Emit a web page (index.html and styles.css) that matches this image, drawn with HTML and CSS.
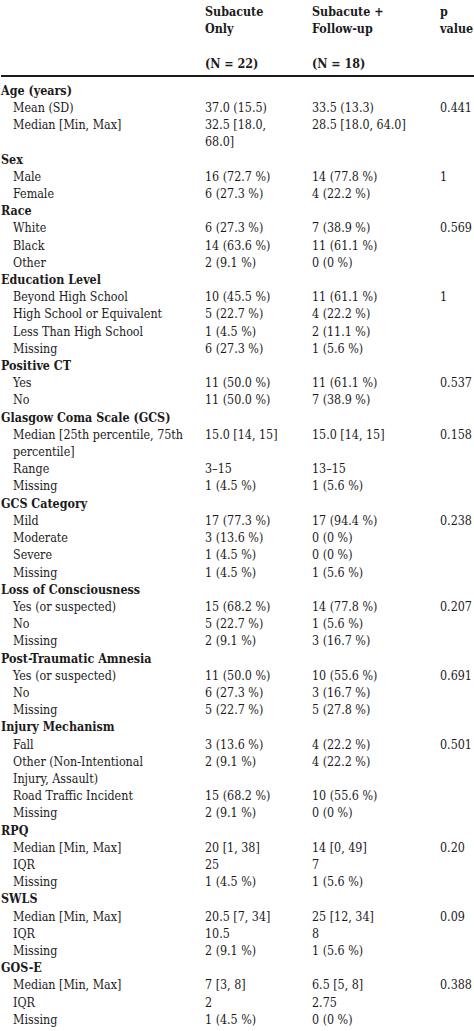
FILE: index.html
```html
<!DOCTYPE html>
<html lang="en">
<head>
<meta charset="utf-8">
<title>Participant characteristics</title>
<link rel="stylesheet" href="styles.css">
</head>
<body>
<table class="stats">
  <colgroup>
    <col class="c-label">
    <col class="c-a">
    <col class="c-b">
    <col class="c-p">
  </colgroup>
  <thead>
    <tr>
      <th></th>
      <th>Subacute<br>Only<br><br>(N = 22)</th>
      <th>Subacute +<br>Follow-up<br><br>(N = 18)</th>
      <th>p<br>value</th>
    </tr>
  </thead>
  <tbody>
    <tr class="grp"><td>Age (years)</td><td></td><td></td><td></td></tr>
    <tr><td class="sub">Mean (SD)</td><td>37.0 (15.5)</td><td>33.5 (13.3)</td><td>0.441</td></tr>
    <tr><td class="sub">Median [Min, Max]</td><td class="wrap">32.5 [18.0, 68.0]</td><td>28.5 [18.0, 64.0]</td><td></td></tr>

    <tr class="grp"><td>Sex</td><td></td><td></td><td></td></tr>
    <tr><td class="sub">Male</td><td>16 (72.7 %)</td><td>14 (77.8 %)</td><td>1</td></tr>
    <tr><td class="sub">Female</td><td>6 (27.3 %)</td><td>4 (22.2 %)</td><td></td></tr>

    <tr class="grp"><td>Race</td><td></td><td></td><td></td></tr>
    <tr><td class="sub">White</td><td>6 (27.3 %)</td><td>7 (38.9 %)</td><td>0.569</td></tr>
    <tr><td class="sub">Black</td><td>14 (63.6 %)</td><td>11 (61.1 %)</td><td></td></tr>
    <tr><td class="sub">Other</td><td>2 (9.1 %)</td><td>0 (0 %)</td><td></td></tr>

    <tr class="grp"><td>Education Level</td><td></td><td></td><td></td></tr>
    <tr><td class="sub">Beyond High School</td><td>10 (45.5 %)</td><td>11 (61.1 %)</td><td>1</td></tr>
    <tr><td class="sub">High School or Equivalent</td><td>5 (22.7 %)</td><td>4 (22.2 %)</td><td></td></tr>
    <tr><td class="sub">Less Than High School</td><td>1 (4.5 %)</td><td>2 (11.1 %)</td><td></td></tr>
    <tr><td class="sub">Missing</td><td>6 (27.3 %)</td><td>1 (5.6 %)</td><td></td></tr>

    <tr class="grp"><td>Positive CT</td><td></td><td></td><td></td></tr>
    <tr><td class="sub">Yes</td><td>11 (50.0 %)</td><td>11 (61.1 %)</td><td>0.537</td></tr>
    <tr><td class="sub">No</td><td>11 (50.0 %)</td><td>7 (38.9 %)</td><td></td></tr>

    <tr class="grp"><td>Glasgow Coma Scale (GCS)</td><td></td><td></td><td></td></tr>
    <tr><td class="sub">Median [25th percentile, 75th percentile]</td><td>15.0 [14, 15]</td><td>15.0 [14, 15]</td><td>0.158</td></tr>
    <tr><td class="sub">Range</td><td>3–15</td><td>13–15</td><td></td></tr>
    <tr><td class="sub">Missing</td><td>1 (4.5 %)</td><td>1 (5.6 %)</td><td></td></tr>

    <tr class="grp"><td>GCS Category</td><td></td><td></td><td></td></tr>
    <tr><td class="sub">Mild</td><td>17 (77.3 %)</td><td>17 (94.4 %)</td><td>0.238</td></tr>
    <tr><td class="sub">Moderate</td><td>3 (13.6 %)</td><td>0 (0 %)</td><td></td></tr>
    <tr><td class="sub">Severe</td><td>1 (4.5 %)</td><td>0 (0 %)</td><td></td></tr>
    <tr><td class="sub">Missing</td><td>1 (4.5 %)</td><td>1 (5.6 %)</td><td></td></tr>

    <tr class="grp"><td>Loss of Consciousness</td><td></td><td></td><td></td></tr>
    <tr><td class="sub">Yes (or suspected)</td><td>15 (68.2 %)</td><td>14 (77.8 %)</td><td>0.207</td></tr>
    <tr><td class="sub">No</td><td>5 (22.7 %)</td><td>1 (5.6 %)</td><td></td></tr>
    <tr><td class="sub">Missing</td><td>2 (9.1 %)</td><td>3 (16.7 %)</td><td></td></tr>

    <tr class="grp"><td>Post-Traumatic Amnesia</td><td></td><td></td><td></td></tr>
    <tr><td class="sub">Yes (or suspected)</td><td>11 (50.0 %)</td><td>10 (55.6 %)</td><td>0.691</td></tr>
    <tr><td class="sub">No</td><td>6 (27.3 %)</td><td>3 (16.7 %)</td><td></td></tr>
    <tr><td class="sub">Missing</td><td>5 (22.7 %)</td><td>5 (27.8 %)</td><td></td></tr>

    <tr class="grp"><td>Injury Mechanism</td><td></td><td></td><td></td></tr>
    <tr><td class="sub">Fall</td><td>3 (13.6 %)</td><td>4 (22.2 %)</td><td>0.501</td></tr>
    <tr><td class="sub">Other (Non-Intentional Injury,&nbsp;Assault)</td><td>2 (9.1 %)</td><td>4 (22.2 %)</td><td></td></tr>
    <tr><td class="sub">Road Traffic Incident</td><td>15 (68.2 %)</td><td>10 (55.6 %)</td><td></td></tr>
    <tr><td class="sub">Missing</td><td>2 (9.1 %)</td><td>0 (0 %)</td><td></td></tr>

    <tr class="grp"><td>RPQ</td><td></td><td></td><td></td></tr>
    <tr><td class="sub">Median [Min, Max]</td><td>20 [1, 38]</td><td>14 [0, 49]</td><td>0.20</td></tr>
    <tr><td class="sub">IQR</td><td>25</td><td>7</td><td></td></tr>
    <tr><td class="sub">Missing</td><td>1 (4.5 %)</td><td>1 (5.6 %)</td><td></td></tr>

    <tr class="grp"><td>SWLS</td><td></td><td></td><td></td></tr>
    <tr><td class="sub">Median [Min, Max]</td><td>20.5 [7, 34]</td><td>25 [12, 34]</td><td>0.09</td></tr>
    <tr><td class="sub">IQR</td><td>10.5</td><td>8</td><td></td></tr>
    <tr><td class="sub">Missing</td><td>2 (9.1 %)</td><td>1 (5.6 %)</td><td></td></tr>

    <tr class="grp"><td>GOS-E</td><td></td><td></td><td></td></tr>
    <tr><td class="sub">Median [Min, Max]</td><td>7 [3, 8]</td><td>6.5 [5, 8]</td><td>0.388</td></tr>
    <tr><td class="sub">IQR</td><td>2</td><td>2.75</td><td></td></tr>
    <tr><td class="sub">Missing</td><td>1 (4.5 %)</td><td>0 (0 %)</td><td></td></tr>
  </tbody>
</table>
</body>
</html>
```
FILE: styles.css
```css
html {
  overflow: hidden;
  background: #ffffff;
}

body {
  margin: 0;
  padding: 3px 0 0 1px;
  background: #ffffff;
  color: #1c1a1b;
  font-family: "DejaVu Serif Condensed", "DejaVu Serif", serif;
  font-stretch: condensed;
  font-size: 12.4px;
}

.stats {
  border-collapse: collapse;
  table-layout: fixed;
  width: 524px;
}

.c-label { width: 204px; }
.c-a { width: 107px; }
.c-b { width: 128px; }
.c-p { width: 85px; }

.stats th,
.stats td {
  padding: 0;
  text-align: left;
  vertical-align: top;
  line-height: 17.2px;
  white-space: normal;
}

.stats th {
  font-weight: bold;
  padding-bottom: 3px;
  border-bottom: 2px solid #1c1a1b;
}

.stats tbody tr:first-child td {
  padding-top: 5px;
}

.stats td:first-child {
  padding-right: 16px;
}

.stats td:nth-child(2) {
  padding-right: 25px;
}

.grp td:first-child {
  font-weight: bold;
}

.stats td.sub {
  padding-left: 12px;
}
```
